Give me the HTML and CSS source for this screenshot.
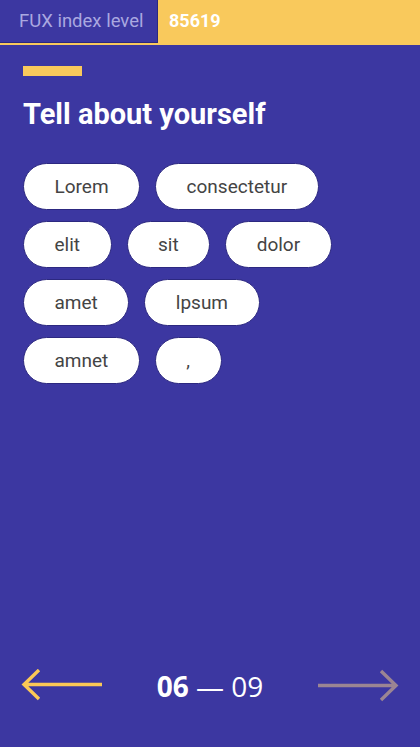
FILE: index.html
```html
<!DOCTYPE html>
<html lang="en">
<head>
<meta charset="utf-8">
<title>Tell about yourself</title>
<link rel="stylesheet" href="styles.css">
</head>
<body>
<div class="screen">
  <header class="topbar">
    <div class="topbar-label">FUX index level</div>
    <div class="topbar-value">85619</div>
  </header>
  <main class="content">
    <div class="accent"></div>
    <h1 class="title">Tell about yourself</h1>
    <div class="chips">
      <span class="chip">Lorem</span>
      <span class="chip">consectetur</span>
      <span class="chip">elit</span>
      <span class="chip">sit</span>
      <span class="chip">dolor</span>
      <span class="chip">amet</span>
      <span class="chip">lpsum</span>
      <span class="chip">amnet</span>
      <span class="chip">,</span>
    </div>
  </main>
  <footer class="pager">
    <svg class="arrow" width="82" height="34" viewBox="0 0 82 34">
      <path d="M81 15.5 H3 M18 1 L3 15.5 L18 30" fill="none" stroke="#fbc856" stroke-width="3.4"/>
    </svg>
    <div class="count"><b>06</b> — 09</div>
    <svg class="arrow" width="82" height="34" viewBox="0 0 82 34">
      <path d="M1 16.5 H79 M64 2 L79 16.5 L64 31" fill="none" stroke="#9b8593" stroke-width="3.4"/>
    </svg>
  </footer>
</div>
</body>
</html>
```
FILE: styles.css
```css
html, body {
  margin: 0;
  padding: 0;
}
body {
  background: #3c37a1;
  font-family: Roboto, "Liberation Sans", sans-serif;
}
.screen {
  min-height: 747px;
  display: flex;
  flex-direction: column;
}
.topbar {
  display: flex;
  height: 43px;
  border-bottom: 2px solid #f9c95c;
}
.topbar-label {
  width: 138px;
  padding-left: 19px;
  background: #3c37a1;
  border-right: 1px solid #2c2880;
  border-bottom: 1px solid #2c2880;
  color: #aaa8e0;
  font-size: 18.5px;
  line-height: 42px;
}
.topbar-value {
  flex: 1;
  background: #f9c95c;
  color: #ffffff;
  font-weight: 700;
  font-size: 18px;
  line-height: 42px;
  padding-left: 11px;
}
.content {
  padding: 21px 23px 0;
}
.accent {
  width: 59px;
  height: 10px;
  background: #f9c95c;
}
.title {
  margin: 21px 0 32px;
  color: #ffffff;
  font-size: 29px;
  font-weight: 700;
  line-height: 34px;
}
.chips {
  display: flex;
  flex-wrap: wrap;
  gap: 11px 15px;
  max-width: 330px;
}
.chip {
  height: 45px;
  padding: 0 30.5px;
  border: 1px solid #2c2880;
  border-radius: 24px;
  background: #ffffff;
  color: #444444;
  font-size: 19px;
  line-height: 45px;
}
.pager {
  margin-top: auto;
  display: flex;
  align-items: center;
  justify-content: space-between;
  padding: 0 21px 44px 21px;
}
.arrow {
  display: block;
}
.count {
  color: #ffffff;
  font-family: "Open Sans", "Noto Sans", sans-serif;
  font-size: 28px;
  line-height: 34px;
}
.count b {
  font-weight: 700;
}
```
